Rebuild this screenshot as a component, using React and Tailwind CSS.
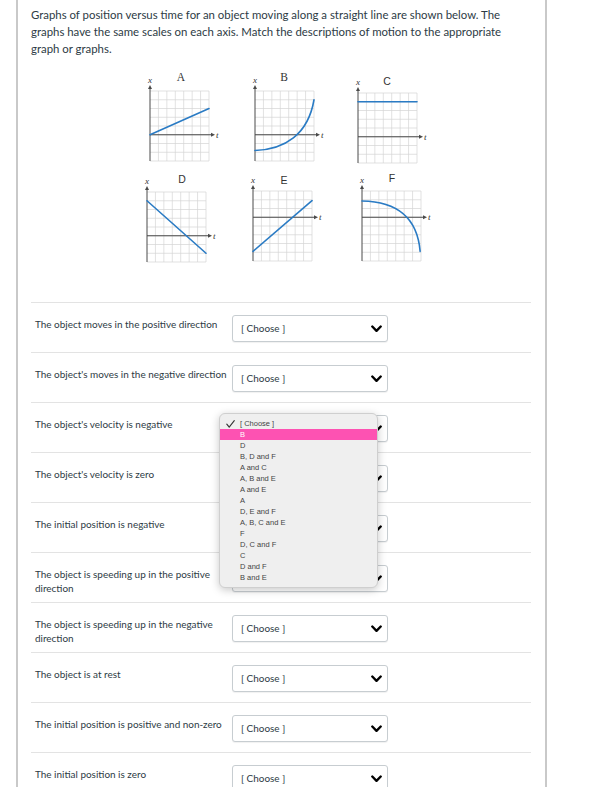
import React from "react";

const W = 59;
const H = 70;
const CW = W / 7;
const RH = H / 8;

const graphsTop = [
  { label: "A", serif: true, gx: 22, gy: 29, lx: 53, ly: 19, axisRow: 5, pts: [[0, 5], [7, 2]] },
  { label: "B", serif: true, gx: 23, gy: 29, lx: 52, ly: 18.5, axisRow: 5, pts: [[0, 6.8], [3.5, 6.7], [6.3, 5], [7, 1]] },
  { label: "C", serif: false, gx: 22, gy: 31, lx: 51, ly: 23, axisRow: 5, pts: [[0, 1], [7, 1]] },
];
const graphsBottom = [
  { label: "D", serif: false, gx: 19, gy: 26, lx: 54, ly: 17, axisRow: 5, pts: [[0, 1], [7, 7]] },
  { label: "E", serif: false, gx: 21, gy: 25, lx: 52, ly: 18, axisRow: 3, pts: [[0, 6.9], [7, 1.1]] },
  { label: "F", serif: false, gx: 26, gy: 25, lx: 56, ly: 16, axisRow: 3, pts: [[0, 1.15], [3.5, 1.2], [6.5, 2.5], [6.9, 6.9]] },
];

function Graph({ g }) {
  const X = (c) => g.gx + c * CW;
  const Y = (r) => g.gy + r * RH;
  const p = g.pts;
  const d =
    p.length === 2
      ? `M${X(p[0][0])} ${Y(p[0][1])} L${X(p[1][0])} ${Y(p[1][1])}`
      : `M${X(p[0][0])} ${Y(p[0][1])} C${X(p[1][0])} ${Y(p[1][1])} ${X(p[2][0])} ${Y(p[2][1])} ${X(p[3][0])} ${Y(p[3][1])}`;
  const ty = Y(g.axisRow);
  const verts = [];
  for (let i = 1; i <= 7; i++) verts.push(X(i));
  const hors = [];
  for (let j = 0; j <= 8; j++) hors.push(Y(j));
  return (
    <svg width="104" height="104" viewBox="0 0 104 104" className="shrink-0">
      {verts.map((x, i) => (
        <line key={"v" + i} x1={x} y1={g.gy} x2={x} y2={g.gy + H} stroke="#d4d4d4" strokeWidth="0.7" />
      ))}
      {hors.map((y, i) => (
        <line key={"h" + i} x1={g.gx} y1={y} x2={g.gx + W} y2={y} stroke="#d4d4d4" strokeWidth="0.7" />
      ))}
      <line x1={g.gx} y1={g.gy - 4} x2={g.gx} y2={g.gy + H} stroke="#4a4a4a" strokeWidth="1" />
      <polygon points={`${g.gx - 2},${g.gy - 2} ${g.gx + 2},${g.gy - 2} ${g.gx},${g.gy - 6}`} fill="#4a4a4a" />
      <line x1={g.gx} y1={ty} x2={g.gx + W + 3} y2={ty} stroke="#4a4a4a" strokeWidth="1" />
      <polygon points={`${g.gx + W + 2},${ty - 2} ${g.gx + W + 2},${ty + 2} ${g.gx + W + 6},${ty}`} fill="#4a4a4a" />
      <text x={g.gx} y={g.gy - 8} fontSize="9" fontStyle="italic" fontFamily="'Liberation Serif', serif" textAnchor="middle" fill="#333">x</text>
      <text x={g.gx + W + 7} y={ty + 3} fontSize="9" fontStyle="italic" fontFamily="'Liberation Serif', serif" fill="#333">t</text>
      <text
        x={g.lx}
        y={g.ly}
        fontSize={g.serif ? "11.5" : "10.5"}
        fontFamily={g.serif ? "'Liberation Serif', serif" : "'Liberation Sans', sans-serif"}
        textAnchor="middle"
        fill="#333"
      >
        {g.label}
      </text>
      <path d={d} fill="none" stroke="#2a7bc4" strokeWidth="1.6" strokeLinecap="round" />
    </svg>
  );
}

const rows = [
  "The object moves in the positive direction",
  "The object's moves in the negative direction",
  "The object's velocity is negative",
  "The object's velocity is zero",
  "The initial position is negative",
  "The object is speeding up in the positive direction",
  "The object is speeding up in the negative direction",
  "The object is at rest",
  "The initial position is positive and non-zero",
  "The initial position is zero",
];

const options = [
  "B",
  "D",
  "B, D and F",
  "A and C",
  "A, B and E",
  "A and E",
  "A",
  "D, E and F",
  "A, B, C and E",
  "F",
  "D, C and F",
  "C",
  "D and F",
  "B and E",
];

function Chevron() {
  return (
    <svg width="11" height="8" viewBox="0 0 11 8">
      <path d="M1.3 1.5 L5.5 5.8 L9.7 1.5" fill="none" stroke="#000" strokeWidth="2.4" strokeLinecap="round" strokeLinejoin="round" />
    </svg>
  );
}

export default function App() {
  return (
    <div className="relative w-[598px] h-[787px] overflow-hidden bg-white font-['Lato',sans-serif] text-[#2d3b45]">
      <div className="ml-[16px] w-[531px] h-full border-x-2 border-[#c9c9c9] pl-[13px] pr-[13px] pt-[6px]">
        <p className="w-[482px] text-[11.4px] leading-[17px]">
          Graphs of position versus time for an object moving along a straight line are shown below. The graphs have the same scales on each axis. Match the descriptions of motion to the appropriate graph or graphs.
        </p>
        <div className="mt-[5px] flex pl-[97px]">
          {graphsTop.map((g) => (
            <Graph key={g.label} g={g} />
          ))}
        </div>
        <div className="flex pl-[97px]">
          {graphsBottom.map((g) => (
            <Graph key={g.label} g={g} />
          ))}
        </div>
        <div className="mt-[32px] w-[500px]">
          {rows.map((r) => (
            <div key={r} className="flex h-[50px] border-t-[1.5px] border-[#e3e3e3]">
              <div className="w-[201px] shrink-0 pl-[4px] pr-[4px] pt-[14px] text-[9.95px] leading-[14px]">{r}</div>
              <div className="mt-[12px] flex h-[27px] w-[156px] items-center justify-between rounded-[3px] border border-[#c7cdd1] bg-white pl-[8px] pr-[5px] shadow-[0_1px_1px_rgba(0,0,0,0.06)]">
                <span className="text-[9.95px] text-[#2d3b45]">[ Choose ]</span>
                <Chevron />
              </div>
            </div>
          ))}
        </div>
      </div>

      <div className="absolute left-[219px] top-[413px] w-[159px] rounded-[6px] border border-[#cfcfcf] bg-[#efefef] pt-[4px] pb-[4px] shadow-[0_2px_8px_rgba(0,0,0,0.22)] font-['Liberation_Sans',Arial,sans-serif] text-[7.5px] text-[#444]">
        <div className="relative flex h-[11px] items-center pl-[20px] leading-[11px]">
          <svg width="9" height="8" viewBox="0 0 9 8" className="absolute left-[6px] top-[2px]">
            <path d="M0.8 4.2 L3.2 7.2 L8.3 0.6" fill="none" stroke="#333" strokeWidth="1.1" strokeLinecap="round" strokeLinejoin="round" />
          </svg>
          [ Choose ]
        </div>
        {options.map((o, i) => (
          <div
            key={o}
            className={
              i === 0
                ? "flex h-[11px] items-center bg-[#fd52b2] pl-[20px] leading-[11px] text-white"
                : "flex h-[11px] items-center pl-[20px] leading-[11px]"
            }
          >
            {o}
          </div>
        ))}
      </div>
    </div>
  );
}
